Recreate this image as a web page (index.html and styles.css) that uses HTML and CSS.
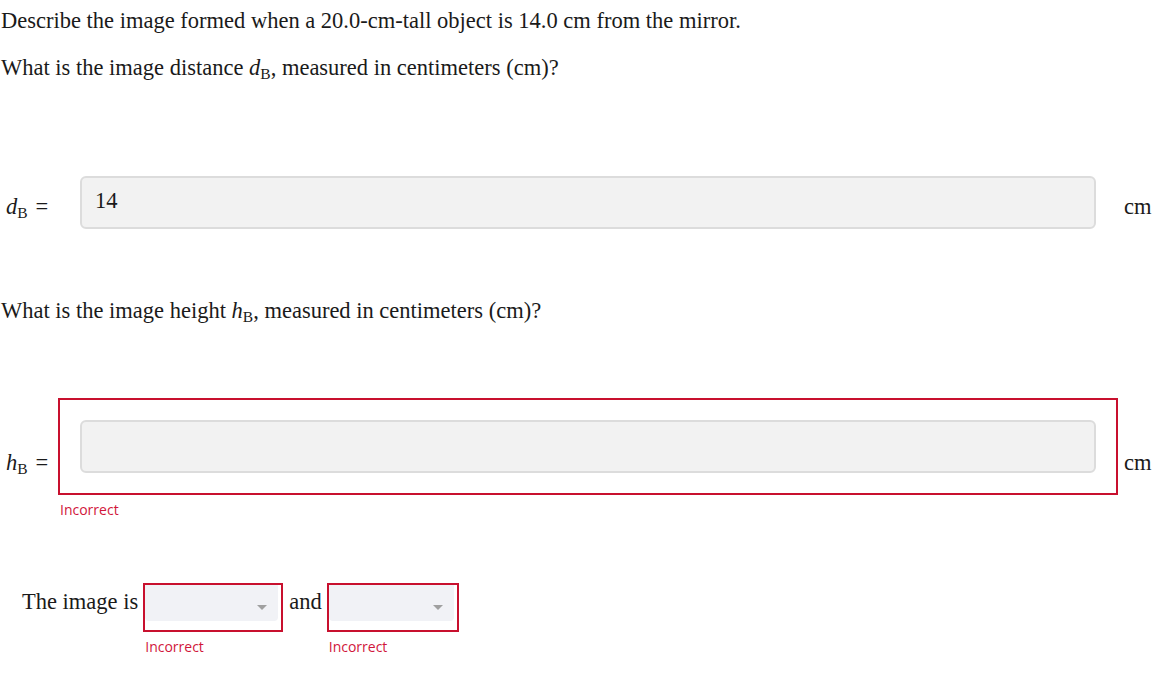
FILE: index.html
```html
<!DOCTYPE html>
<html>
<head>
<meta charset="utf-8">
<link rel="stylesheet" href="styles.css">
</head>
<body>
<div class="page">
  <p class="q q1">Describe the image formed when a 20.0-cm-tall object is 14.0 cm from the mirror.</p>
  <p class="q q2">What is the image distance <span class="var"><i>d</i><sub>B</sub></span>, measured in centimeters (cm)?</p>

  <div class="row row1">
    <div class="label label1"><span class="var"><i>d</i><sub>B</sub></span><span class="eq">=</span></div>
    <div class="input"><span class="val">14</span></div>
    <div class="unit unit1">cm</div>
  </div>

  <p class="q q3">What is the image height <span class="var"><i>h</i><sub>B</sub></span>, measured in centimeters (cm)?</p>

  <div class="row row2">
    <div class="label label2"><span class="var"><i>h</i><sub>B</sub></span><span class="eq">=</span></div>
    <div class="field wide-field">
      <div class="errbox wide">
        <div class="input"></div>
      </div>
      <div class="incorrect">Incorrect</div>
    </div>
    <div class="unit unit2">cm</div>
  </div>

  <div class="sentence">
    <span class="stext">The image is</span>
    <div class="field">
      <div class="errbox sel sel1">
        <div class="select"><span class="arrow"></span></div>
      </div>
      <div class="incorrect">Incorrect</div>
    </div>
    <span class="stext and">and</span>
    <div class="field">
      <div class="errbox sel sel2">
        <div class="select"><span class="arrow"></span></div>
      </div>
      <div class="incorrect">Incorrect</div>
    </div>
  </div>
</div>
</body>
</html>
```

FILE: styles.css
```css
html, body {
  margin: 0;
  padding: 0;
  background: #ffffff;
}

.page {
  font-family: "Liberation Serif", "Times New Roman", serif;
  font-size: 22.5px;
  line-height: 23px;
  color: #1a1a1a;
  width: 1163px;
}

.q {
  margin: 0;
  padding-left: 1px;
}

.q1 { padding-top: 9px; }
.q2 { margin-top: 24px; }
.q3 { margin-top: 70px; }

.var i {
  font-style: italic;
}

.var sub {
  font-size: 15.5px;
  line-height: 0;
  vertical-align: -4px;
  font-style: normal;
}

.eq {
  margin-left: 8px;
}

.row {
  display: flex;
  align-items: flex-start;
}

.row1 { margin-top: 97px; }
.row2 { margin-top: 76px; }

.label {
  flex: none;
  padding-left: 6px;
  box-sizing: border-box;
  white-space: nowrap;
}

.label1 { width: 80px; margin-top: 19px; }
.label2 { width: 58px; margin-top: 53px; }

.input {
  flex: 1;
  height: 53px;
  box-sizing: border-box;
  border: 2px solid #dcdcdc;
  border-radius: 6px;
  background: #f2f2f2;
  padding: 11px 0 0 13px;
}

.unit {
  flex: none;
  width: 39px;
}

.unit1 { margin-left: 28px; margin-top: 19px; }
.unit2 { margin-left: 6px; margin-top: 53px; }

.field {
  display: flex;
  flex-direction: column;
}

.wide-field {
  flex: 1;
}

.errbox {
  border: 2px solid #c8102e;
  box-sizing: border-box;
}

.errbox.wide {
  padding: 20px;
  display: flex;
}

.incorrect {
  font-family: "Open Sans", "Noto Sans", sans-serif;
  font-size: 14px;
  line-height: 18px;
  color: #d1163b;
  margin-top: 6px;
  padding-left: 2px;
}

.sentence {
  display: flex;
  align-items: flex-start;
  margin-top: 64px;
  padding-left: 22px;
}

.stext {
  margin-top: 7px;
  margin-right: 5px;
  white-space: nowrap;
}

.and {
  margin-left: 6px;
}

.errbox.sel {
  height: 49px;
}

.sel1 { width: 140px; }
.sel2 { width: 132px; }

.select {
  position: relative;
  height: 36px;
  margin-right: 3px;
  background: #f1f2f6;
  border-radius: 0 0 4px 4px;
}

.arrow {
  position: absolute;
  right: 11px;
  top: 20px;
  width: 0;
  height: 0;
  border-left: 5px solid transparent;
  border-right: 5px solid transparent;
  border-top: 5px solid #a0a0a0;
}
```
